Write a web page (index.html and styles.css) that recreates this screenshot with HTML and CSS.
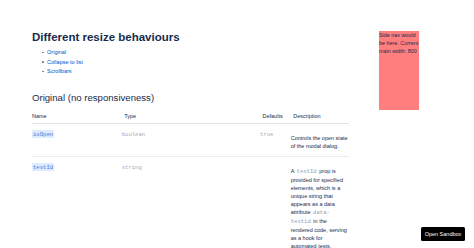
FILE: index.html
```html
<!DOCTYPE html>
<html lang="en">
<head>
<meta charset="utf-8">
<title>Different resize behaviours</title>
<link rel="stylesheet" href="styles.css">
</head>
<body>
<div class="layout">
  <main class="main">
    <h1 class="title">Different resize behaviours</h1>
    <ul class="links">
      <li><a href="#original">Original</a></li>
      <li><a href="#collapse">Collapse to list</a></li>
      <li><a href="#scrollbars">Scrollbars</a></li>
    </ul>
    <h2 class="subtitle" id="original">Original (no responsiveness)</h2>
    <table class="props">
      <colgroup>
        <col class="w-name">
        <col class="w-type">
        <col class="w-def">
        <col class="w-desc">
      </colgroup>
      <thead>
        <tr>
          <th class="h-first">Name</th>
          <th>Type</th>
          <th>Defaults</th>
          <th>Description</th>
        </tr>
      </thead>
      <tbody>
        <tr>
          <td><code class="prop">isOpen</code></td>
          <td><code class="type">boolean</code></td>
          <td><code class="type">true</code></td>
          <td><p class="desc">Controls the open state of the modal dialog.</p></td>
        </tr>
        <tr>
          <td><code class="prop">testId</code></td>
          <td><code class="type">string</code></td>
          <td></td>
          <td><p class="desc">A <code class="inline">testId</code> prop is provided for specified elements, which is a unique string that appears as a data attribute <code class="inline">data-testid</code> in the rendered code, serving as a hook for automated tests.</p></td>
        </tr>
      </tbody>
    </table>
  </main>
  <aside class="sidenav">Side nav would be here. Current main width: 800</aside>
</div>
<button class="sandbox" type="button">Open Sandbox</button>
</body>
</html>
```

FILE: styles.css
```css
html, body {
  margin: 0;
  padding: 0;
  background: #ffffff;
}

body {
  font-family: "Liberation Sans", Arial, sans-serif;
  color: #172b4d;
  font-size: 5.5px;
  line-height: 8px;
  height: 248px;
  overflow: hidden;
}

.layout {
  display: flex;
  align-items: flex-start;
  gap: 27px;
  padding-left: 32px;
}

.main {
  width: 320px;
  flex: none;
  padding-top: 30px;
}

.title {
  margin: 0;
  font-size: 11.5px;
  line-height: 14px;
  font-weight: 700;
  color: #172b4d;
}

.links {
  margin: 4.3px 0 0 0;
  padding-left: 10px;
  list-style: none;
}

.links li {
  display: flex;
  align-items: center;
  gap: 3.5px;
  line-height: 8px;
  margin-top: 1.5px;
}

.links li::before {
  content: "";
  width: 1.6px;
  height: 1.6px;
  border-radius: 50%;
  background: #6b778c;
  flex: none;
}

.links li:first-child {
  margin-top: 0;
}

.links a {
  color: #0052cc;
  text-decoration: none;
}

.subtitle {
  margin: 16.5px 0 0 0;
  font-size: 9.6px;
  line-height: 11.2px;
  font-weight: 400;
  color: #172b4d;
}

.props {
  margin-top: 9px;
  border-collapse: collapse;
  table-layout: fixed;
  width: 316.7px;
}

.w-name { width: 89.7px; }
.w-type { width: 138.3px; }
.w-def { width: 30.7px; }
.w-desc { width: 58px; }

.props th,
.props td {
  box-sizing: border-box;
}

.props th {
  text-align: left;
  font-weight: 400;
  color: #172b4d;
  padding: 0 0 2.5px 2.5px;
  line-height: 8px;
  border-bottom: 1px solid #dfe1e6;
  vertical-align: bottom;
  white-space: nowrap;
}

.props th.h-first {
  padding-left: 0;
}

.props td {
  padding: 6px 0 6px 0;
  vertical-align: top;
  border-bottom: 1px solid #ebecf0;
}

code {
  font-family: "Liberation Mono", "Courier New", monospace;
  font-size: 5.6px;
}

.prop {
  background: #deebff;
  color: #4c7ad3;
  padding: 0.6px 1px;
  border-radius: 1px;
}

.type {
  color: #a5adba;
}

.desc {
  margin: 4px 0 0 0;
  color: #172b4d;
  line-height: 8px;
}

.inline {
  color: #97a0af;
  padding: 0 1px;
}

.sidenav {
  flex: none;
  width: 40px;
  height: 79px;
  margin-top: 31px;
  background: #ff7f7f;
  color: #172b4d;
  font-size: 5.4px;
  line-height: 8px;
}

.sandbox {
  position: fixed;
  right: 9px;
  bottom: 7px;
  width: 44px;
  height: 14px;
  padding: 0;
  border: none;
  border-radius: 1.5px;
  background: #000000;
  color: #ffffff;
  font-family: "Liberation Sans", Arial, sans-serif;
  font-size: 5.5px;
  line-height: 14px;
  text-align: center;
}
```
